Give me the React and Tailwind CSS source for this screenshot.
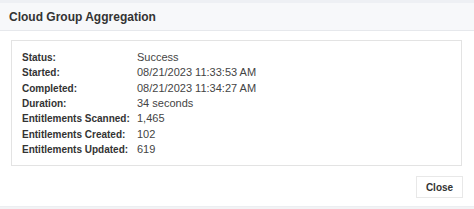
import React from 'react';

const rows = [
    ['Status:', 'Success'],
    ['Started:', '08/21/2023 11:33:53 AM'],
    ['Completed:', '08/21/2023 11:34:27 AM'],
    ['Duration:', '34 seconds'],
    ['Entitlements Scanned:', '1,465'],
    ['Entitlements Created:', '102'],
    ['Entitlements Updated:', '619'],
];

const App = () => {
    return (
        <div className="w-[474px] h-[209px] bg-white flex flex-col overflow-hidden" style={{ fontFamily: '"Liberation Sans", Arial, sans-serif' }}>
            <div className="h-[3px] bg-[#eef0f4]"></div>
            <div className="h-[28px] bg-[#f7f8fa] border-b border-[#e6e8ec] flex items-center px-[9px]">
                <h2 className="text-[12px] font-bold text-[#333]">Cloud Group Aggregation</h2>
            </div>
            <div className="flex-1 px-[11px] pt-[9px]">
                <div className="w-[451px] border border-[#e3e3e3] pl-[10px] pt-[9px] pb-[8px]">
                    {rows.map(([label, value]) => (
                        <div key={label} className="flex h-[15.3px] items-center leading-[15px] whitespace-nowrap">
                            <span className="w-[115px] shrink-0 text-[10px] font-bold text-[#333]">{label}</span>
                            <span className="text-[11px] text-[#444]">{value}</span>
                        </div>
                    ))}
                </div>
                <div className="flex justify-end mt-[10px]">
                    <button className="w-[47px] h-[22px] border border-[#e8e8e8] bg-white text-[10px] font-bold text-[#333]">Close</button>
                </div>
            </div>
            <div className="h-[3px] bg-[#f2f3f5] border-t border-[#eceef1]"></div>
        </div>
    );
};

export default App;
